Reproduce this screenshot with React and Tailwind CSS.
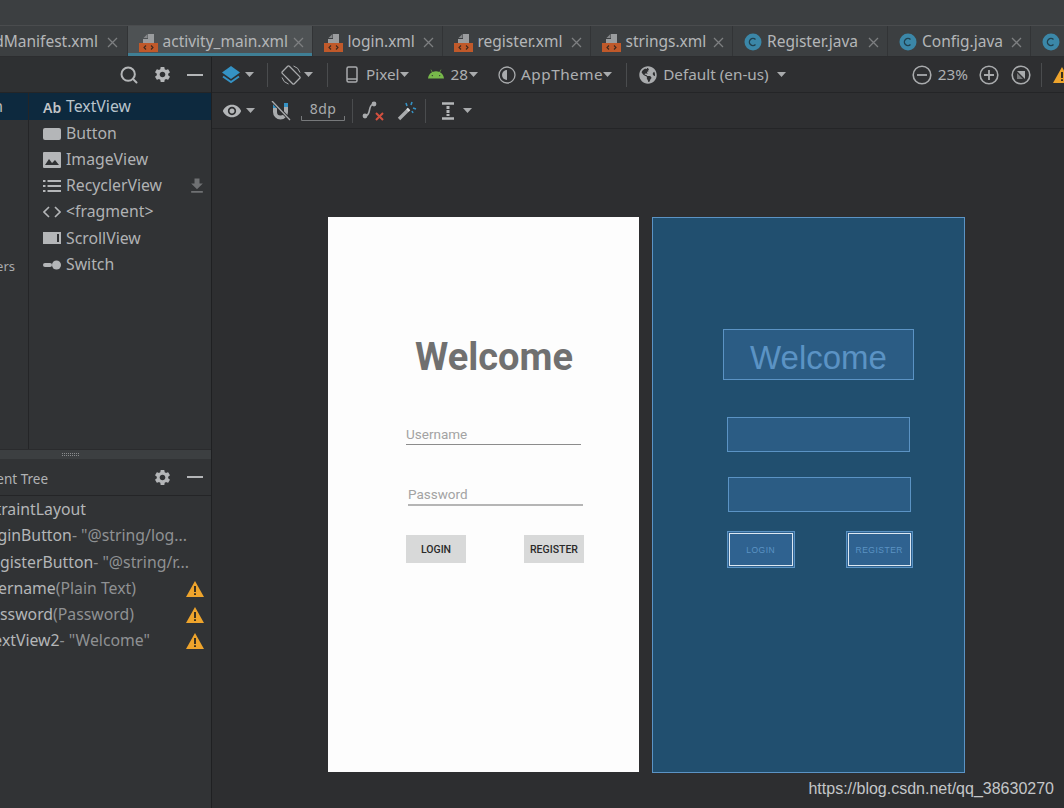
import React from 'react';
import { Search } from 'lucide-react';
import { MdSettings, MdVisibility, MdDownload } from 'react-icons/md';
import { FaGlobeAmericas, FaAndroid } from 'react-icons/fa';

const uiFont = { fontFamily: '"Noto Sans", sans-serif' };

const XmlIcon = () => (
  <svg width="19" height="19" viewBox="0 0 19 19" className="shrink-0">
    <path d="M4 10V6H9V1H15V10Z" fill="#9a9c9e" />
    <path d="M4.5 5L8.5 1V5Z" fill="#85878a" />
    <rect x="0" y="10" width="19" height="9" fill="#c0592a" />
    <path d="M7 12.5L5 14.5L7 16.5M12 12.5L14 14.5L12 16.5" stroke="#3a2a20" strokeWidth="1.1" fill="none" />
  </svg>
);

const ClassIcon = () => (
  <svg width="18" height="18" viewBox="0 0 18 18" className="shrink-0">
    <circle cx="9" cy="9" r="8.5" fill="#3b87a8" />
    <path d="M11.5 6.4A3.6 3.6 0 1 0 11.5 11.6" stroke="#21414f" strokeWidth="1.4" fill="none" />
  </svg>
);

const Close = () => (
  <svg width="11" height="11" viewBox="0 0 11 11" className="shrink-0">
    <path d="M1 1L10 10M10 1L1 10" stroke="#7d7f81" strokeWidth="1.3" />
  </svg>
);

const Caret = ({ className = '' }) => (
  <svg width="9" height="5" viewBox="0 0 9 5" className={`shrink-0 ${className}`}>
    <path d="M0 0H9L4.5 5Z" fill="#a9abad" />
  </svg>
);

const Sep = ({ className = '' }) => <div className={`w-px h-[24px] bg-[#4a4c4e] shrink-0 ${className}`} />;

const Warn = () => (
  <svg width="18" height="16" viewBox="0 0 18 16" className="shrink-0">
    <path d="M9 0L18 16H0Z" fill="#eea42c" />
    <path d="M8 5H10V11H8ZM8 12.2H10V14H8Z" fill="#3a3120" />
  </svg>
);

const tabs = [
  { text: 'AndroidManifest.xml', w: 128, first: true },
  { text: 'activity_main.xml', w: 185, icon: 'xml', active: true },
  { text: 'login.xml', w: 130, icon: 'xml' },
  { text: 'register.xml', w: 148, icon: 'xml' },
  { text: 'strings.xml', w: 142, icon: 'xml' },
  { text: 'Register.java', w: 155, icon: 'class' },
  { text: 'Config.java', w: 143, icon: 'class' },
  { text: '', w: 40, icon: 'class', last: true },
];

const widthClass = {
  128: 'w-[128px]', 185: 'w-[185px]', 130: 'w-[130px]', 148: 'w-[148px]',
  142: 'w-[142px]', 155: 'w-[155px]', 143: 'w-[143px]', 40: 'w-[40px]',
};

const Tab = ({ tab }) => (
  <div className={`${widthClass[tab.w]} relative h-full flex items-center shrink-0 border-r border-[#323436] ${tab.active ? 'bg-[#4e5254]' : ''}`}>
    {tab.first ? (
      <div className="w-[98px] flex justify-end overflow-hidden whitespace-nowrap shrink-0 mr-[9px] pt-[2px]">
        <span>{tab.text}</span>
      </div>
    ) : (
      <div className={`flex items-center pl-[11px] whitespace-nowrap pt-[2px] ${tab.icon === 'xml' ? 'gap-[4.5px]' : 'gap-[5px]'}`}>
        {tab.icon === 'xml' ? <XmlIcon /> : <ClassIcon />}
        <span>{tab.text}</span>
      </div>
    )}
    {!tab.last && <div className={tab.first ? 'pt-[2px]' : 'ml-auto pr-[8px] pt-[2px]'}><Close /></div>}
    {tab.active && <div className="absolute left-0 right-0 bottom-0 h-[3px] bg-[#3f7f95]" />}
  </div>
);

const paletteRows = [
  { text: 'TextView', icon: 'ab', selected: true },
  { text: 'Button', icon: 'button' },
  { text: 'ImageView', icon: 'image' },
  { text: 'RecyclerView', icon: 'list', download: true },
  { text: '<fragment>', icon: 'code' },
  { text: 'ScrollView', icon: 'scroll' },
  { text: 'Switch', icon: 'switch' },
];

const PaletteIcon = ({ type }) => {
  if (type === 'ab') return <span className="w-[18px] text-[14px] font-semibold text-[#c4c6c8]">Ab</span>;
  return (
    <svg width="18" height="16" viewBox="0 0 18 16" className="shrink-0">
      {type === 'button' && <rect x="0" y="2" width="18" height="12" rx="2" fill="#b4b6b8" />}
      {type === 'image' && (
        <>
          <rect x="0" y="0" width="18" height="16" rx="1" fill="#b4b6b8" />
          <path d="M2 13L6 7L9 11L12 8L16 13Z" fill="#2f3133" />
        </>
      )}
      {type === 'list' && <path d="M0 2H2.5V4H0ZM4.5 2H18V4H4.5ZM0 7H2.5V9H0ZM4.5 7H18V9H4.5ZM0 12H2.5V14H0ZM4.5 12H18V14H4.5Z" fill="#b4b6b8" />}
      {type === 'code' && <path d="M6 3L1 8L6 13M12 3L17 8L12 13" stroke="#b4b6b8" strokeWidth="1.6" fill="none" />}
      {type === 'scroll' && (
        <>
          <rect x="0" y="2" width="18" height="12" fill="#b4b6b8" />
          <rect x="14" y="4" width="2" height="8" fill="#2f3133" />
        </>
      )}
      {type === 'switch' && (
        <>
          <rect x="0" y="6" width="9" height="4" rx="2" fill="#b4b6b8" />
          <circle cx="13.5" cy="8" r="4.5" fill="#b4b6b8" />
        </>
      )}
    </svg>
  );
};

const treeRows = [
  { w: 'w-[86px]', name: 'ConstraintLayout', rest: '' },
  { w: 'w-[187px]', name: 'LoginButton', rest: '- "@string/log...' },
  { w: 'w-[189px]', name: 'RegisterButton', rest: '- "@string/r...' },
  { w: 'w-[136px]', name: 'Username', rest: '(Plain Text)', warn: true },
  { w: 'w-[134px]', name: 'Password', rest: '(Password)', warn: true },
  { w: 'w-[150px]', name: 'TextView2', rest: '- "Welcome"', warn: true },
];

const LeftPanel = () => (
  <div className="w-[212px] shrink-0 flex flex-col border-r border-[#1f2022] bg-[#313335]">
    <div className="h-[36px] shrink-0 flex items-center justify-end gap-[14px] pr-[8px] bg-[#2e3032] border-b border-[#242527]">
      <Search size={20} strokeWidth={2.4} color="#b4b6b8" />
      <MdSettings size={19} color="#b4b6b8" />
      <div className="w-[16px] h-[2px] ml-[1px] bg-[#b4b6b8]" />
    </div>
    <div className="h-[357px] shrink-0 flex border-b border-[#2a2b2d]">
      <div className="w-[29px] shrink-0 border-r border-[#242527] relative overflow-hidden">
        <div className="h-[27px] bg-[#0d293e] flex items-center text-[#bbbbbb] text-[15.8px]">
          <div className="w-[3px] flex justify-end overflow-hidden whitespace-nowrap"><span>n</span></div>
        </div>
        <div className="absolute left-0 w-[15px] top-[164px] flex justify-end whitespace-nowrap text-[#a9abad] text-[13px]"><span>ers</span></div>
      </div>
      <div className="flex-1 flex flex-col">
        {paletteRows.map((row) => (
          <div
            key={row.text}
            className={`h-[26.2px] shrink-0 flex items-center gap-[5px] pl-[14px] pr-[4px] pt-[1px] text-[15.8px] ${row.selected ? 'bg-[#0d293e] h-[27px] text-[#b9c4cc]' : 'text-[#b0b2b4]'}`}
          >
            <PaletteIcon type={row.icon} />
            <span>{row.text}</span>
            {row.download && <MdDownload size={20} color="#6f7173" className="ml-auto" />}
          </div>
        ))}
      </div>
    </div>
    <div className="h-[9px] shrink-0 bg-[#3c3f41] flex items-center pl-[62px]">
      <div className="w-[17px] h-[3px] border-y border-dotted border-[#8a8c8e]" />
    </div>
    <div className="h-[37px] shrink-0 flex items-center justify-between pr-[8px] border-b border-[#242527] text-[13.5px] text-[#b0b2b4]">
      <div className="w-[48px] flex justify-end overflow-hidden whitespace-nowrap pt-[4px]"><span>Component Tree</span></div>
      <div className="flex items-center gap-[15px]">
        <MdSettings size={19} color="#b4b6b8" />
        <div className="w-[16px] h-[2px] bg-[#b4b6b8]" />
      </div>
    </div>
    <div className="pt-[1px] flex flex-col">
      {treeRows.map((row) => (
        <div key={row.name} className="h-[26.2px] flex items-center justify-between pr-[7px] text-[15.8px]">
          <div className={`${row.w} flex justify-end overflow-hidden whitespace-nowrap shrink-0`}>
            <span className="text-[#b4b6b8]">{row.name}<span className="text-[#8f9193]">{row.rest}</span></span>
          </div>
          {row.warn && <Warn />}
        </div>
      ))}
    </div>
  </div>
);

const TopToolbar = () => (
  <div className="h-[36px] shrink-0 flex items-center pl-[9px] bg-[#2e2f31] border-b border-[#242527] text-[15.3px] text-[#adafb1] whitespace-nowrap">
    <svg width="20" height="20" viewBox="0 0 20 20" className="shrink-0">
      <path d="M10 1L19 7.5L10 14L1 7.5Z" fill="#3592c4" />
      <path d="M2 11.5L10 17L18 11.5" stroke="#3592c4" strokeWidth="2" fill="none" />
    </svg>
    <Caret className="ml-[4px]" />
    <Sep className="ml-[13px]" />
    <svg width="20" height="20" viewBox="0 0 20 20" className="shrink-0 ml-[13px]">
      <rect x="5" y="1.5" width="10" height="17" rx="1.2" transform="rotate(-45 10 10)" fill="none" stroke="#a9abad" strokeWidth="1.3" />
      <path d="M12.5 1A9.4 9.4 0 0 1 19 7.5M7.5 19A9.4 9.4 0 0 1 1 12.5" stroke="#a9abad" strokeWidth="1" fill="none" />
    </svg>
    <Caret className="ml-[3px]" />
    <Sep className="ml-[14px]" />
    <svg width="12" height="17" viewBox="0 0 12 17" className="shrink-0 ml-[18px]">
      <rect x="1" y="1" width="10" height="15" rx="1.5" fill="none" stroke="#a9abad" strokeWidth="1.5" />
      <path d="M1 13H11" stroke="#a9abad" strokeWidth="1.5" />
    </svg>
    <span className="ml-[8px]">Pixel</span>
    <Caret />
    <FaAndroid size={16} color="#77b84a" className="ml-[19px] shrink-0" />
    <span className="ml-[7px]">28</span>
    <Caret className="ml-[1px]" />
    <svg width="18" height="18" viewBox="0 0 18 18" className="shrink-0 ml-[20px]">
      <circle cx="9" cy="9" r="8" fill="none" stroke="#a9abad" strokeWidth="1.3" />
      <path d="M9 4A5 5 0 0 0 9 14Z" fill="#a9abad" />
    </svg>
    <span className="ml-[5px] tracking-[0.5px]">AppTheme</span>
    <Caret />
    <Sep className="ml-[14px]" />
    <FaGlobeAmericas size={18} color="#a9abad" className="ml-[12px] shrink-0" />
    <span className="ml-[6px]">Default (en-us)</span>
    <Caret className="ml-[8px]" />
    <svg width="20" height="20" viewBox="0 0 20 20" className="shrink-0 ml-[126px]">
      <circle cx="10" cy="10" r="8.8" fill="none" stroke="#a9abad" strokeWidth="1.6" />
      <path d="M5 10H15" stroke="#a9abad" strokeWidth="1.8" />
    </svg>
    <span className="ml-[6px]">23%</span>
    <svg width="20" height="20" viewBox="0 0 20 20" className="shrink-0 ml-[11px]">
      <circle cx="10" cy="10" r="8.8" fill="none" stroke="#a9abad" strokeWidth="1.6" />
      <path d="M5 10H15M10 5V15" stroke="#a9abad" strokeWidth="1.8" />
    </svg>
    <svg width="20" height="20" viewBox="0 0 20 20" className="shrink-0 ml-[12px]">
      <circle cx="10" cy="10" r="8.8" fill="none" stroke="#a9abad" strokeWidth="1.6" />
      <path d="M6 6H14V14Z" fill="#a9abad" />
      <path d="M6 8V14H12Z" fill="#77797b" />
    </svg>
    <Sep className="ml-[10px]" />
    <div className="ml-[11px] shrink-0"><Warn /></div>
  </div>
);

const SecondToolbar = () => (
  <div className="h-[36px] shrink-0 flex items-center pl-[10px] bg-[#2e2f31] border-b border-[#242527]">
    <MdVisibility size={20} color="#b4b6b8" className="shrink-0" />
    <Caret className="ml-[4px]" />
    <svg width="20" height="20" viewBox="0 0 20 20" className="shrink-0 ml-[16px]">
      <path d="M2 3V11A7.5 7.5 0 0 0 17 11V3H13V11A3.5 3.5 0 0 1 6 11V3Z" fill="#a9abad" />
      <rect x="13" y="2" width="4" height="4" fill="#3592c4" />
      <rect x="2" y="4" width="4" height="3" fill="#3592c4" />
      <path d="M1 0L19 19" stroke="#2e2f31" strokeWidth="3" />
      <path d="M1 0L19 19" stroke="#a9abad" strokeWidth="1.3" />
    </svg>
    <div className="ml-[10px] w-[44px] shrink-0 flex flex-col items-center text-[14px] leading-[15px] text-[#a9abad] tracking-[0.5px]">
      <span>8dp</span>
      <svg width="44" height="5" viewBox="0 0 44 5">
        <path d="M0.5 0V4.5H43.5V0" stroke="#77797b" fill="none" />
      </svg>
    </div>
    <Sep className="ml-[7px]" />
    <svg width="22" height="20" viewBox="0 0 22 20" className="shrink-0 ml-[9px]">
      <path d="M3 15C10 15 5 3 12 3" stroke="#a9abad" strokeWidth="1.6" fill="none" />
      <circle cx="3" cy="15" r="2.4" fill="#a9abad" />
      <circle cx="12" cy="3" r="2.4" fill="#a9abad" />
      <path d="M14 12L21 19M21 12L14 19" stroke="#d4503f" strokeWidth="2" />
    </svg>
    <svg width="20" height="20" viewBox="0 0 20 20" className="shrink-0 ml-[13px]">
      <path d="M2 18L12 8" stroke="#a9abad" strokeWidth="3.4" />
      <path d="M10.5 9.5L12 8" stroke="#d8dadc" strokeWidth="3.4" />
      <path d="M9 2L10 5M15 1L14 4M19 8L16 7M16 12L15 10" stroke="#3592c4" strokeWidth="1.6" />
    </svg>
    <Sep className="ml-[8px]" />
    <svg width="14" height="18" viewBox="0 0 14 18" className="shrink-0 ml-[15px]">
      <path d="M1 1.5H13M1 16.5H13" stroke="#b4b6b8" strokeWidth="2.6" />
      <path d="M7 4V14" stroke="#b4b6b8" strokeWidth="3" strokeDasharray="3 1" />
    </svg>
    <Caret className="ml-[8px]" />
  </div>
);

const LightPhone = () => (
  <div className="w-[311px] h-[555px] shrink-0 bg-[#fdfdfd] flex flex-col items-start" style={{ fontFamily: 'Roboto, sans-serif' }}>
    <div className="mt-[118px] ml-[87px] h-[44px] flex items-center text-[38px] font-bold leading-none text-[#707070]">Welcome</div>
    <div className="mt-[47px] ml-[78px] w-[175px] h-[19px] flex items-center pb-[2px] border-b border-[#8c8c8c] text-[13.5px] text-[#a3a3a3]">Username</div>
    <div className="mt-[42px] ml-[80px] w-[175px] h-[19px] flex items-center pb-[2px] border-b-2 border-[#b5b5b5] text-[13.5px] text-[#a3a3a3]">Password</div>
    <div className="mt-[29px] ml-[78px] w-[178px] h-[28px] flex justify-between text-[10.5px] font-medium text-[#2a2a2a]">
      <div className="w-[60px] pt-[1px] bg-[#d8d9d9] flex items-center justify-center">LOGIN</div>
      <div className="w-[60px] pt-[1px] bg-[#d8d9d9] flex items-center justify-center">REGISTER</div>
    </div>
  </div>
);

const BlueBox = ({ className = '', children }) => (
  <div className={`bg-[#2b5c84] border border-[#5b93c4] flex items-center justify-center ${className}`}>{children}</div>
);

const BlueButton = ({ label }) => (
  <div className="w-[67.5px] h-[37px] p-px bg-[#2f6290] border border-[#5b93c4] flex">
    <div className="flex-1 pt-[2px] border-[1.5px] border-[#dde8f2] bg-[#2f6290] flex items-center justify-center text-[8.5px] tracking-[0.5px] text-[#5b93c4]">{label}</div>
  </div>
);

const BluePhone = () => (
  <div className="w-[313px] h-[556px] shrink-0 bg-[#214f6f] border border-[#5b93c4] flex flex-col items-start" style={{ fontFamily: '"Liberation Sans", sans-serif' }}>
    <BlueBox className="mt-[111px] ml-[70px] w-[191px] h-[51px] pt-[7px] text-[33px] text-[#5b93c4]">Welcome</BlueBox>
    <BlueBox className="mt-[37px] ml-[74px] w-[183px] h-[35px]" />
    <BlueBox className="mt-[25px] ml-[75px] w-[183px] h-[35px]" />
    <div className="mt-[19px] ml-[74px] w-[186px] flex justify-between">
      <BlueButton label="LOGIN" />
      <BlueButton label="REGISTER" />
    </div>
  </div>
);

export default function App() {
  return (
    <div className="w-[1064px] h-[808px] overflow-hidden flex flex-col bg-[#2d2e30]" style={uiFont}>
      <div className="h-[25px] shrink-0 bg-[#3c3f41]" />
      <div className="h-[32px] shrink-0 flex items-center bg-[#3c3f41] border-y border-[#4a4c4e] border-b-[#2c2d2f] text-[15.5px] text-[#b4b6b8]">
        {tabs.map((tab) => <Tab key={tab.w} tab={tab} />)}
      </div>
      <div className="flex-1 flex min-h-0">
        <LeftPanel />
        <div className="flex-1 min-w-0 flex flex-col">
          <TopToolbar />
          <SecondToolbar />
          <div className="relative flex-1 flex items-start gap-[13px] pl-[116px] pt-[88px] bg-[#2d2e30]">
            <LightPhone />
            <BluePhone />
            <div className="absolute right-[10px] bottom-[11px] text-[16px] leading-none text-[#c4c6c8]" style={{ fontFamily: '"Liberation Sans", sans-serif' }}>https://blog.csdn.net/qq_38630270</div>
          </div>
        </div>
      </div>
    </div>
  );
}
